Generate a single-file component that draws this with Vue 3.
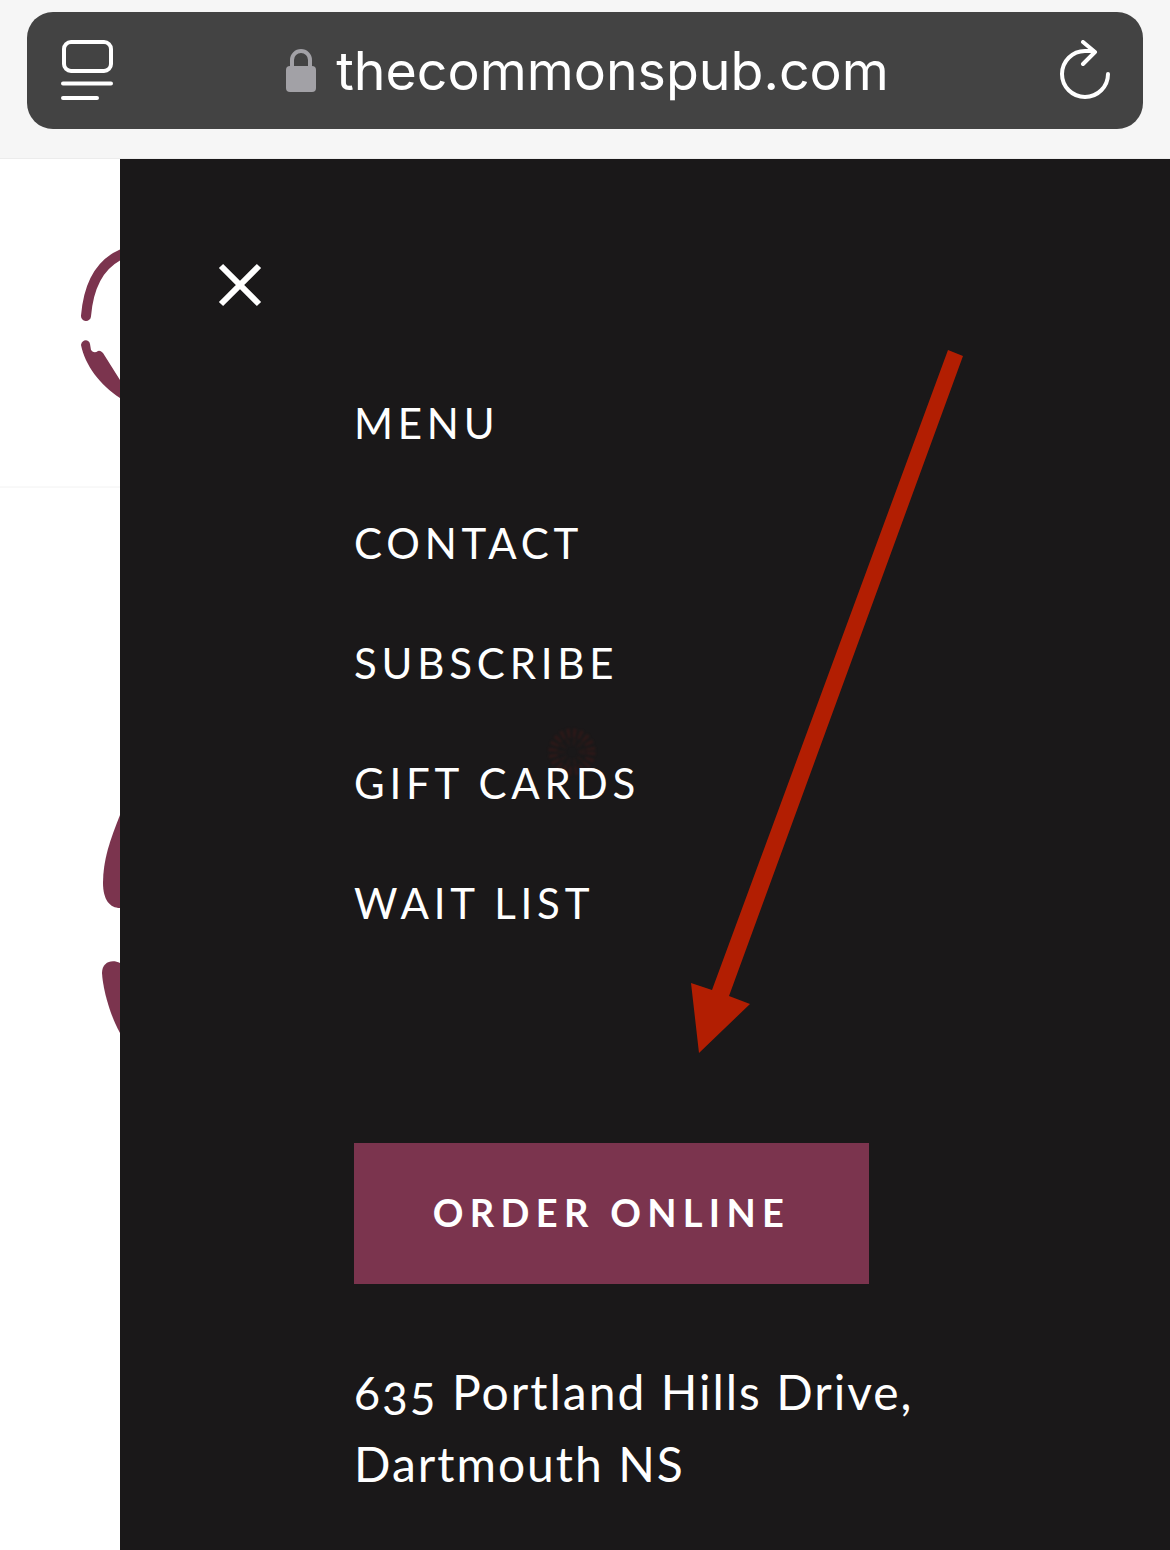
<template>
  <div class="phone">
    <header class="toolbar">
      <div class="address-bar">
        <svg class="tabs-icon" viewBox="0 0 54 62" fill="none" stroke="#fff" stroke-width="4" stroke-linecap="round">
          <rect x="4" y="2" width="47" height="29" rx="7" />
          <path d="M3 43.500H51M3 58H37" />
        </svg>
        <div class="url">
          <svg class="lock-icon" viewBox="0 0 30 44">
            <path d="M6 20V11a9 9 0 0 1 18 0v9" fill="none" stroke="#a2a1a6" stroke-width="4" />
            <rect y="17" width="30" height="26" rx="4" fill="#a2a1a6" />
          </svg>
          <span class="url-text">thecommonspub.com</span>
        </div>
        <svg class="reload-icon" viewBox="0 0 54 62" fill="none" stroke="#fff" stroke-width="4" stroke-linecap="round" stroke-linejoin="round">
          <path d="M51 34A23 23 0 1 1 28 11H35" />
          <path d="M26 2L38 12L26 24" />
        </svg>
      </div>
    </header>

    <div class="page">
      <aside class="behind">
        <svg width="120" height="1391" viewBox="0 159 120 1391">
          <path d="M122 254Q90 268 86 316" fill="none" stroke="#7b344e" stroke-width="10" stroke-linecap="round" />
          <path d="M81 345C82 339 89 339 90 344L91 350Q94 354 98 351Q100 350 103 353L120 380V398C100 385 85 365 81 345Z" fill="#7b344e" />
          <path d="M120 487H0" stroke="#f2f2f2" stroke-width="1" />
          <path d="M120 815C110 840 103 860 103 883C103 900 110 908 120 908Z" fill="#7b344e" />
          <path d="M120 963C112 959 102 962 102 973C103 990 110 1015 120 1033Z" fill="#7b344e" />
        </svg>
      </aside>

      <nav class="panel">
        <svg class="spinner-ghost" viewBox="0 0 50 50" fill="none" stroke="#4a1a16">
          <circle cx="25" cy="25" r="19" stroke-width="9" stroke-dasharray="3 3" opacity="0.4" />
          <circle cx="25" cy="25" r="10" stroke-width="7" stroke-dasharray="2 4" opacity="0.25" />
        </svg>
        <svg class="close-icon" viewBox="0 0 44 44" stroke="#fff" stroke-width="6">
          <path d="M3 3L41 41M41 3L3 41" />
        </svg>
        <ul class="links">
          <li v-for="link in links" :key="link">{{ link }}</li>
        </ul>
        <div class="order-btn">ORDER ONLINE</div>
        <p class="address">635 Portland Hills Drive,<br />Dartmouth NS</p>
      </nav>
    </div>

    <svg class="arrow" viewBox="680 340 300 720">
      <path d="M948 350L963 356L729 996L750 1004L699 1053L691 983L712 990Z" fill="#b21e02" />
    </svg>
  </div>
</template>

<script setup>
const links = ['MENU', 'CONTACT', 'SUBSCRIBE', 'GIFT CARDS', 'WAIT LIST']
</script>

<style>
html,
body {
  margin: 0;
  background: #fff;
  overflow: hidden;
}
</style>

<style scoped>
.phone {
  position: relative;
  width: 1170px;
  height: 1550px;
  overflow: hidden;
  font-family: Lato, 'Liberation Sans', sans-serif;
}

.toolbar {
  box-sizing: border-box;
  height: 159px;
  padding: 12px 27px 0;
  background: #f6f6f6;
  border-bottom: 1px solid #ececec;
}

.address-bar {
  display: flex;
  align-items: center;
  justify-content: space-between;
  height: 117px;
  padding: 0 32px 0 33px;
  border-radius: 26px;
  background: #434343;
}

.tabs-icon,
.reload-icon {
  width: 54px;
  height: 62px;
}

.url {
  display: flex;
  align-items: center;
  gap: 20px;
  margin-left: 4px;
}

.lock-icon {
  width: 30px;
  height: 44px;
}

.url-text {
  font-family: Inter, sans-serif;
  font-size: 53.700px;
  color: #fff;
}

.page {
  display: flex;
  height: 1391px;
}

.behind {
  flex: 0 0 120px;
}

.behind svg {
  display: block;
}

.panel {
  position: relative;
  flex: 1;
  box-sizing: border-box;
  padding: 105px 0 0 234px;
  background: #1a1819;
  color: #fff;
}

.spinner-ghost {
  position: absolute;
  left: 427px;
  top: 568px;
  width: 50px;
  height: 50px;
  filter: blur(1px);
}

.close-icon {
  position: absolute;
  left: 98px;
  top: 104px;
  width: 44px;
  height: 44px;
}

.links {
  position: relative;
  margin: 99px 0 0;
  padding: 0;
  list-style: none;
}

.links li {
  height: 120px;
  line-height: 120px;
  font-size: 42px;
  letter-spacing: 4.800px;
}

.order-btn {
  width: 515px;
  height: 141px;
  margin-top: 180px;
  line-height: 139px;
  text-align: center;
  background: #7b344e;
  font-size: 38px;
  font-weight: 700;
  letter-spacing: 6.300px;
}

.address {
  margin: 72px 0 0;
  font-size: 48px;
  line-height: 72px;
  letter-spacing: 2px;
  font-weight: 400;
  font-variant-numeric: oldstyle-nums;
}

.arrow {
  position: absolute;
  left: 680px;
  top: 340px;
  width: 300px;
  height: 720px;
}
</style>
